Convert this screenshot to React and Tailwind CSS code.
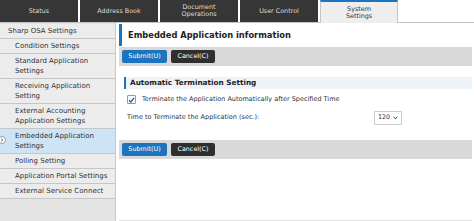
import React from 'react';

const tabs = [
  { label: 'Status' },
  { label: 'Address Book' },
  { label: 'Document\nOperations' },
  { label: 'User Control' },
  { label: 'System\nSettings', active: true },
];

const menu = [
  { label: 'Sharp OSA Settings', top: true },
  { label: 'Condition Settings' },
  { label: 'Standard Application\nSettings' },
  { label: 'Receiving Application\nSetting' },
  { label: 'External Accounting\nApplication Settings' },
  { label: 'Embedded Application\nSettings', active: true },
  { label: 'Polling Setting' },
  { label: 'Application Portal Settings' },
  { label: 'External Service Connect' },
];

const ButtonBar = () => (
  <div className="flex items-center gap-[4px] h-[19px] bg-[#d9d9d9] pl-[3px]">
    <button className="h-[13px] w-[45px] rounded-[2px] bg-[#1c74bd] text-white text-[6.4px] leading-[13px]">
      Submit(U)
    </button>
    <button className="h-[13px] w-[44px] rounded-[2px] bg-[#2f2f2f] text-white text-[6.4px] leading-[13px]">
      Cancel(C)
    </button>
  </div>
);

export default function App() {
  return (
    <div
      className="w-[474px] h-[221px] bg-white overflow-hidden text-[#333]"
      style={{ fontFamily: '"DejaVu Sans", Verdana, sans-serif' }}
    >
      {/* Tabs */}
      <div className="flex gap-[2px] h-[23px] border-b border-[#c4c4c4]">
        {tabs.map((t) => (
          <div
            key={t.label}
            className={
              t.active
                ? 'w-[78px] h-[23px] bg-[#eeeeee] border-t-2 border-x border-t-[#1c74bd] border-x-[#c4c4c4] flex items-center justify-center text-center whitespace-pre-line text-[6.4px] leading-[7px] text-[#333]'
                : 'w-[78px] h-[22px] bg-[#363636] flex items-center justify-center text-center whitespace-pre-line text-[6.4px] leading-[7px] text-[#dedede]'
            }
          >
            {t.label}
          </div>
        ))}
      </div>

      <div className="flex h-[198px]">
        {/* Sidebar */}
        <div className="w-[116px] bg-[#e4e4e4] border-r border-[#c8c8c8] pt-[1px]">
          {menu.map((m) => (
            <div
              key={m.label}
              className={`relative border-b border-[#c6c6c6] py-[2px] whitespace-pre-line text-[7px] leading-[10px] ${
                m.top ? 'pl-[8px]' : 'pl-[15px]'
              } ${m.active ? 'bg-[#cde3f6]' : 'bg-[#ececec]'}`}
            >
              {m.active && (
                <span className="absolute left-[-2px] top-[7px] w-[8px] h-[8px] rounded-full border border-[#999] bg-white flex items-center justify-center">
                  <svg width="4" height="4" viewBox="0 0 4 4">
                    <path d="M1 0.5 L3 2 L1 3.5" fill="none" stroke="#666" strokeWidth="0.8" />
                  </svg>
                </span>
              )}
              {m.label}
            </div>
          ))}
        </div>

        {/* Main */}
        <div className="flex-1 ml-[3px] mr-[2px] flex flex-col border-b border-[#e0e0e0]">
          <div className="h-[22px] flex items-center border-l-[3px] border-[#1c74bd] pl-[6px] mt-[1px] text-[8.3px] font-bold text-[#222]">
            Embedded Application information
          </div>
          <div className="mt-[1px]">
            <ButtonBar />
          </div>

          <div className="mt-[11px] ml-[5px] h-[12px] flex items-center bg-[#eef3f9] border-l-[2px] border-[#1c74bd] pl-[4px] text-[7.3px] font-bold text-[#222]">
            Automatic Termination Setting
          </div>
          <div className="flex items-center mt-[6px] ml-[8px] text-[6.5px]">
            <span className="w-[9px] h-[9px] border border-[#999] bg-white rounded-[1px] flex items-center justify-center mr-[6px]">
              <svg width="8" height="8" viewBox="0 0 8 8">
                <path d="M1.2 4.2 L3.2 6.2 L7 1.6" fill="none" stroke="#1c5f9c" strokeWidth="1.5" />
              </svg>
            </span>
            Terminate the Application Automatically after Specified Time
          </div>
          <div className="flex items-center justify-between mt-[6px] ml-[8px] mr-[70px] text-[6.5px]">
            <span>Time to Terminate the Application (sec.):</span>
            <span className="h-[14px] w-[28px] border border-[#ccc] bg-white flex items-center justify-center gap-[3px] text-[6.4px]">
              120
              <svg width="5" height="4" viewBox="0 0 5 4">
                <path d="M0.6 0.8 L2.5 2.8 L4.4 0.8" fill="none" stroke="#333" strokeWidth="1" />
              </svg>
            </span>
          </div>

          <div className="mt-[15px]">
            <ButtonBar />
          </div>
        </div>
      </div>
    </div>
  );
}
